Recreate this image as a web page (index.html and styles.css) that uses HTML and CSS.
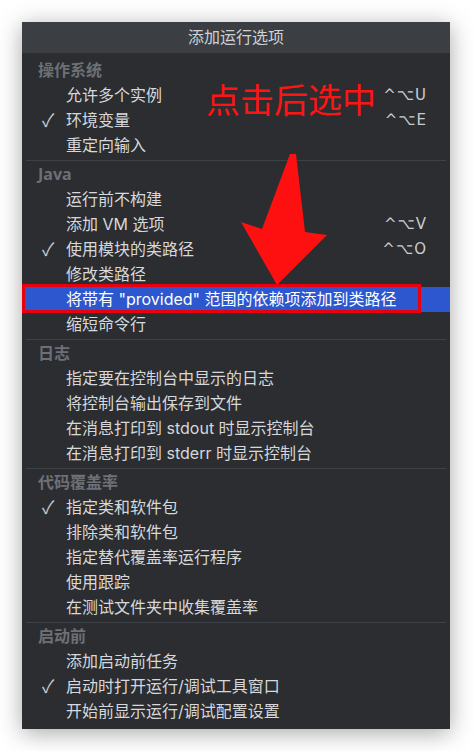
FILE: index.html
```html
<!DOCTYPE html>
<html lang="zh-CN">
<head>
    <meta charset="UTF-8">
    <meta name="viewport" content="width=device-width, initial-scale=1.0">
    <title>添加运行选项</title>
    <link rel="stylesheet" href="styles.css">
</head>
<body>
    <div class="popup">
        <div class="title">添加运行选项</div>
        <div class="list">
            <div class="section">
                <div class="header">操作系统</div>
                <div class="item"><span class="check"></span><span class="label">允许多个实例</span><span class="keys">^⌥U</span></div>
                <div class="item"><span class="check">✓</span><span class="label">环境变量</span><span class="keys">^⌥E</span></div>
                <div class="item"><span class="check"></span><span class="label">重定向输入</span></div>
            </div>
            <div class="sep"></div>
            <div class="section">
                <div class="header">Java</div>
                <div class="item"><span class="check"></span><span class="label">运行前不构建</span></div>
                <div class="item"><span class="check"></span><span class="label">添加 VM 选项</span><span class="keys">^⌥V</span></div>
                <div class="item"><span class="check">✓</span><span class="label">使用模块的类路径</span><span class="keys">^⌥O</span></div>
                <div class="item"><span class="check"></span><span class="label">修改类路径</span></div>
                <div class="item selected"><span class="check"></span><span class="label">将带有 "provided" 范围的依赖项添加到类路径</span></div>
                <div class="item"><span class="check"></span><span class="label">缩短命令行</span></div>
            </div>
            <div class="sep"></div>
            <div class="section">
                <div class="header">日志</div>
                <div class="item"><span class="check"></span><span class="label">指定要在控制台中显示的日志</span></div>
                <div class="item"><span class="check"></span><span class="label">将控制台输出保存到文件</span></div>
                <div class="item"><span class="check"></span><span class="label">在消息打印到 stdout 时显示控制台</span></div>
                <div class="item"><span class="check"></span><span class="label">在消息打印到 stderr 时显示控制台</span></div>
            </div>
            <div class="sep"></div>
            <div class="section">
                <div class="header">代码覆盖率</div>
                <div class="item"><span class="check">✓</span><span class="label">指定类和软件包</span></div>
                <div class="item"><span class="check"></span><span class="label">排除类和软件包</span></div>
                <div class="item"><span class="check"></span><span class="label">指定替代覆盖率运行程序</span></div>
                <div class="item"><span class="check"></span><span class="label">使用跟踪</span></div>
                <div class="item"><span class="check"></span><span class="label">在测试文件夹中收集覆盖率</span></div>
            </div>
            <div class="sep"></div>
            <div class="section">
                <div class="header">启动前</div>
                <div class="item"><span class="check"></span><span class="label">添加启动前任务</span></div>
                <div class="item"><span class="check">✓</span><span class="label">启动时打开运行/调试工具窗口</span></div>
                <div class="item"><span class="check"></span><span class="label">开始前显示运行/调试配置设置</span></div>
            </div>
        </div>

        <!-- annotation drawn over the menu -->
        <div class="note">点击后选中</div>
        <svg class="arrow" width="428" height="707" viewBox="0 0 428 707">
            <polygon points="268,132 274,132 283,210 305,213 255,263 219,200 240,207" fill="#ff1010"/>
        </svg>
        <div class="mark"></div>
    </div>
</body>
</html>
```

FILE: styles.css
```css
body {
    margin: 0;
    padding: 22px;
    background-color: #ffffff;
    font-family: "Noto Sans", "Noto Sans CJK SC", sans-serif;
}
.popup {
    position: relative;
    width: 428px;
    background-color: #2b2d30;
    box-shadow: 0 4px 22px rgba(0, 0, 0, 0.35);
    color: #d6d8db;
}
.title {
    height: 31px;
    line-height: 31px;
    text-align: center;
    font-size: 16px;
    color: #cfd1d4;
    background-color: #3b3e42;
}
.list {
    padding: 5px 0;
}
.header {
    height: 25px;
    line-height: 25px;
    padding-left: 16px;
    font-size: 16px;
    font-weight: bold;
    color: #6d7076;
}
.item {
    display: flex;
    height: 25px;
    line-height: 25px;
    font-size: 16px;
    padding: 0 23px 0 20px;
}
.check {
    width: 24px;
    font-family: "DejaVu Sans", sans-serif;
    font-size: 18px;
    font-weight: 300;
    color: #c8cacd;
}
.label {
    flex: 1;
    white-space: nowrap;
    font-family: "Inter", "Noto Sans CJK SC", sans-serif;
}
.keys {
    font-family: "DejaVu Sans", sans-serif;
    font-size: 15px;
    letter-spacing: 1px;
    color: #c9cbce;
}
.selected {
    background-color: #2d57cf;
    color: #ffffff;
}
.sep {
    height: 1px;
    margin: 2px 4px 1px;
    background-color: #3e4145;
}
.note {
    position: absolute;
    left: 184px;
    top: 59px;
    font-size: 34px;
    line-height: 36px;
    color: #ff1414;
    font-family: "Noto Sans CJK SC", sans-serif;
}
.arrow {
    position: absolute;
    left: 0;
    top: 0;
}
.mark {
    position: absolute;
    left: 0;
    top: 262px;
    width: 393px;
    height: 23px;
    border: 3px solid #e8000f;
}
```
